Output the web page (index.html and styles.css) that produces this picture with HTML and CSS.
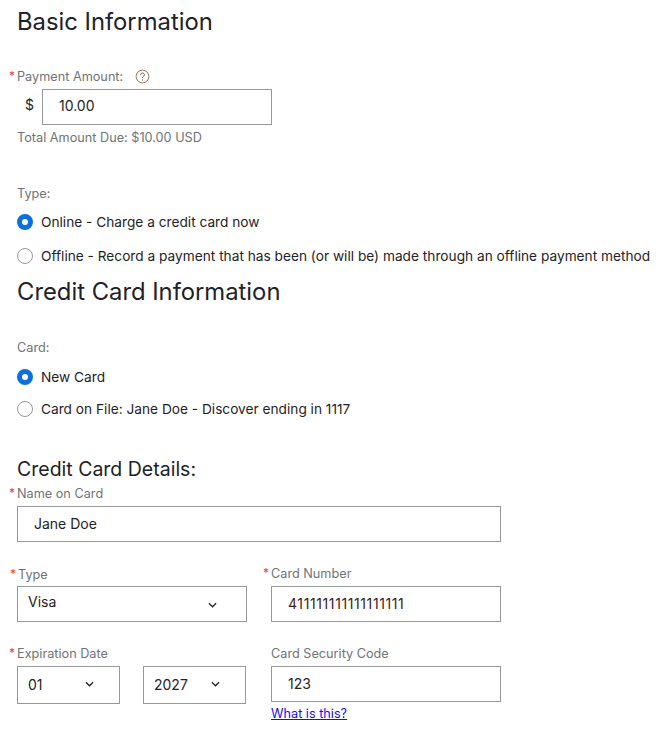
FILE: index.html
```html
<!DOCTYPE html>
<html lang="en">
  <head>
    <meta charset="UTF-8" />
    <title>Payment</title>
    <link rel="stylesheet" href="styles.css">
  </head>
  <body>
    <h1 class="section-title first">Basic Information</h1>

    <div class="field amount-field">
      <label class="label required">Payment Amount:
        <svg class="help-icon" viewBox="0 0 16 16" width="15" height="15">
          <circle cx="8" cy="8" r="6.8" fill="none" stroke="#9a6a45" stroke-width="1"/>
          <path d="M5.9 6.3c0-1.2 1-2 2.1-2s2.1.8 2.1 1.9c0 1.6-2.1 1.6-2.1 3.3" fill="none" stroke="#555" stroke-width="1"/>
          <circle cx="8" cy="11.6" r=".7" fill="#555"/>
        </svg>
      </label>
      <div class="amount-row">
        <span class="currency">$</span>
        <div class="input amount-input">10.00</div>
      </div>
      <div class="hint">Total Amount Due: $10.00 USD</div>
    </div>

    <div class="group type-group">
      <div class="label">Type:</div>
      <div class="radio-row selected"><span class="radio"></span>Online - Charge a credit card now</div>
      <div class="radio-row offline"><span class="radio"></span>Offline - Record a payment that has been (or will be) made through an offline payment method</div>
    </div>

    <h1 class="section-title">Credit Card Information</h1>

    <div class="group card-group">
      <div class="label">Card:</div>
      <div class="radio-row selected"><span class="radio"></span>New Card</div>
      <div class="radio-row on-file"><span class="radio"></span>Card on File: Jane Doe - Discover ending in 1117</div>
    </div>

    <h2 class="details-title">Credit Card Details:</h2>

    <div class="field name-field">
      <label class="label required">Name on Card</label>
      <div class="input">Jane Doe</div>
    </div>

    <div class="card-grid">
      <div class="field">
        <label class="label required type-label">Type</label>
        <div class="input select short-pad visa-select">Visa
          <svg class="chevron" viewBox="0 0 10 6" width="9" height="6"><path d="M1 1l4 4 4-4" fill="none" stroke="#222" stroke-width="1.4"/></svg>
        </div>
      </div>
      <div class="field">
        <label class="label required">Card Number</label>
        <div class="input number-input">411111111111111111</div>
      </div>
      <div class="field">
        <label class="label required">Expiration Date</label>
        <div class="date-row">
          <div class="input select short-pad date-select">01
            <svg class="chevron" viewBox="0 0 10 6" width="9" height="6"><path d="M1 1l4 4 4-4" fill="none" stroke="#222" stroke-width="1.4"/></svg>
          </div>
          <div class="input select short-pad date-select">2027
            <svg class="chevron" viewBox="0 0 10 6" width="9" height="6"><path d="M1 1l4 4 4-4" fill="none" stroke="#222" stroke-width="1.4"/></svg>
          </div>
        </div>
      </div>
      <div class="field">
        <label class="label">Card Security Code</label>
        <div class="input">123</div>
        <a class="help-link" href="#">What is this?</a>
      </div>
    </div>
  </body>
</html>
```

FILE: styles.css
```css
* {
  box-sizing: border-box;
}

body {
  margin: 0;
  padding: 0 0 0 17px;
  width: 666px;
  height: 733px;
  overflow: hidden;
  background: #ffffff;
  color: #1f2227;
  font-family: Inter, "Noto Sans", sans-serif;
  font-size: 14px;
}

.section-title {
  margin: 0;
  font-size: 23.8px;
  line-height: 30px;
  font-weight: 400;
}

.section-title.first {
  margin-top: 7px;
}

.details-title {
  margin: 37px 0 0;
  font-size: 19.5px;
  line-height: 26px;
  font-weight: 400;
}

.label {
  display: block;
  position: relative;
  color: #6f7378;
  font-size: 12.7px;
  line-height: 16px;
}

.required::before {
  content: "*";
  position: absolute;
  left: -8px;
  top: -1px;
  color: #e0452f;
  font-size: 12px;
}

.input {
  display: flex;
  align-items: center;
  height: 36px;
  padding: 0 16px 2px;
  border: 1px solid #96999e;
  background: #ffffff;
  font-size: 14px;
}

.amount-field {
  margin-top: 32px;
}

.help-icon {
  margin-left: 8px;
  vertical-align: -3px;
}

.amount-row {
  display: flex;
  align-items: center;
  margin-top: 4px;
}

.currency {
  width: 25px;
  padding-left: 8px;
  padding-bottom: 5px;
  font-size: 14px;
}

.amount-input {
  width: 230px;
  padding-bottom: 3px;
}

.hint {
  margin-top: 5px;
  color: #6f7378;
  font-size: 12.7px;
  line-height: 16px;
}

.type-group {
  margin-top: 40px;
}

.radio-row {
  display: flex;
  align-items: center;
  height: 20px;
  font-size: 13.7px;
  white-space: nowrap;
}

.label + .radio-row {
  margin-top: 10px;
}

.radio-row.offline {
  margin-top: 14px;
}

.radio-row.on-file {
  margin-top: 12px;
}

.radio {
  flex: none;
  width: 16px;
  height: 16px;
  margin-right: 8px;
  border: 1px solid #96999e;
  border-radius: 50%;
}

.selected .radio {
  border: 5px solid #0b6fdd;
  background: #ffffff;
}

.type-group + .section-title {
  margin-top: 11px;
}

.card-group {
  margin-top: 33px;
}

.card-group .label + .radio-row {
  margin-top: 11px;
}

.name-field {
  margin-top: 4px;
}

.name-field .input {
  width: 484px;
  margin-top: 4px;
}

.card-grid {
  display: grid;
  grid-template-columns: 230px 230px;
  column-gap: 24px;
  row-gap: 24px;
  margin-top: 24px;
}

.card-grid .input {
  margin-top: 4px;
}

.type-label {
  margin-left: 1px;
  top: 1px;
}

.select {
  justify-content: space-between;
}

.short-pad {
  padding: 0 29px 0 10px;
}

.visa-select {
  padding-bottom: 6px;
}

.visa-select .chevron {
  margin-top: 7px;
}

.chevron {
  flex: none;
}

.date-row {
  display: flex;
  gap: 23px;
}

.date-select {
  width: 103px;
  height: 38px;
  padding-right: 25px;
  padding-bottom: 2px;
}

.number-input {
  color: #3a1c1c;
  letter-spacing: 0.6px;
}

.help-link {
  display: block;
  margin-top: 4px;
  color: #1a0dee;
  font-size: 12.7px;
  line-height: 16px;
}
```
